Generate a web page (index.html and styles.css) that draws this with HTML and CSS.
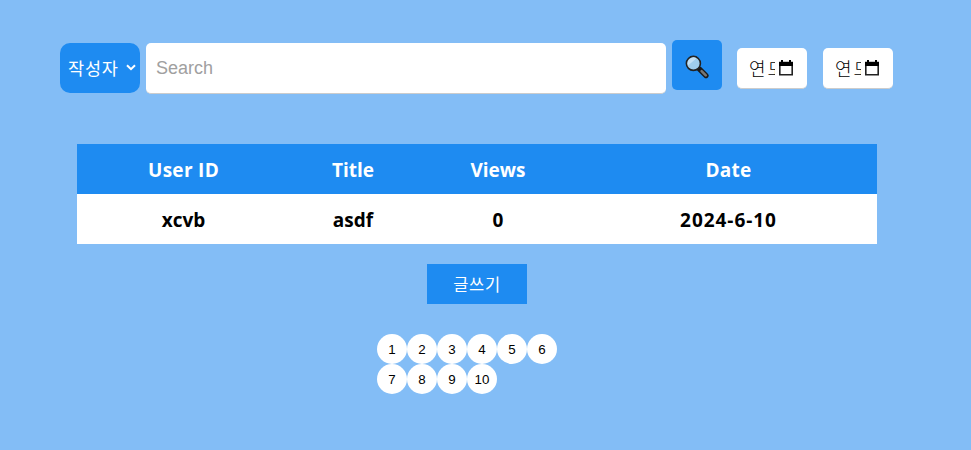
FILE: index.html
```html
<!DOCTYPE html>
<html lang="ko">
<head>
    <meta charset="UTF-8">
    <meta name="viewport" content="width=device-width, initial-scale=1.0">
    <title>Board</title>
    <link rel="stylesheet" href="styles.css">
</head>
<body>
    <form class="search">
        <div class="search-type">
            <span>작성자</span>
            <svg width="10" height="7" viewBox="0 0 10 7"><path d="M1 1.2L5 5.2L9 1.2" fill="none" stroke="#fff" stroke-width="2"/></svg>
        </div>
        <input class="search-text" type="text" placeholder="Search">
        <button class="search-btn" type="button">
            <svg width="24" height="24" viewBox="0 0 24 24">
                <path d="M14.5 14.2L21 20.6" stroke="#1a1a1a" stroke-width="5.2" stroke-linecap="round"/>
                <path d="M16.6 16.2L20.8 20.4" stroke="#777" stroke-width="2.6" stroke-linecap="round"/>
                <circle cx="8.4" cy="8.4" r="7" fill="#9fcdec" stroke="#222" stroke-width="1.6"/>
                <path d="M3 10.5L11.5 3.2A6 6 0 0 0 3 10.5z" fill="#c4e1f5"/>
            </svg>
        </button>
        <div class="date">
            <span class="date-text">연도</span>
            <svg width="16" height="16" viewBox="0 0 16 16"><path d="M1.8 2.5h12.4v12.2H1.8z" fill="none" stroke="#222" stroke-width="1.6"/><path d="M1 2h14v4H1zM3 0h2v3H3zM11 0h2v3h-2z" fill="#000"/></svg>
        </div>
        <div class="date">
            <span class="date-text">연도</span>
            <svg width="16" height="16" viewBox="0 0 16 16"><path d="M1.8 2.5h12.4v12.2H1.8z" fill="none" stroke="#222" stroke-width="1.6"/><path d="M1 2h14v4H1zM3 0h2v3H3zM11 0h2v3h-2z" fill="#000"/></svg>
        </div>
    </form>
    <main class="board">
        <table class="list">
            <colgroup>
                <col class="col-user">
                <col class="col-title">
                <col class="col-views">
                <col class="col-date">
            </colgroup>
            <thead>
                <tr><th class="user">User ID</th><th>Title</th><th>Views</th><th class="user">Date</th></tr>
            </thead>
            <tbody>
                <tr><td>xcvb</td><td>asdf</td><td>0</td><td class="day">2024-6-10</td></tr>
            </tbody>
        </table>
        <button class="write" type="button">글쓰기</button>
        <div class="pages">
            <button>1</button>
            <button>2</button>
            <button>3</button>
            <button>4</button>
            <button>5</button>
            <button>6</button>
            <button>7</button>
            <button>8</button>
            <button>9</button>
            <button>10</button>
        </div>
    </main>
</body>
</html>
```
FILE: styles.css
```css
* {
    box-sizing: border-box;
}
body {
    margin: 0;
    background: #83bdf6;
    font-family: "Open Sans", "Noto Sans CJK KR", sans-serif;
}
button {
    border: none;
    padding: 0;
}
.search {
    display: flex;
    align-items: flex-start;
    padding: 40px 0 0 60px;
    height: 144px;
}
.search-type {
    display: flex;
    align-items: center;
    justify-content: space-between;
    width: 80px;
    height: 50px;
    margin-top: 3px;
    padding: 0 4px 1px 8px;
    border-radius: 10px;
    background: #1e8bf1;
    color: #fff;
    font: 17.5px "Noto Sans CJK KR", sans-serif;
    letter-spacing: 0.8px;
    white-space: nowrap;
}
.search-text {
    width: 520px;
    height: 51px;
    margin: 3px 6px 0;
    padding: 0 10px;
    border: none;
    border-bottom: 1px solid #ccc;
    border-radius: 5px;
    font: 18px "Liberation Sans", Arial, sans-serif;
}
.search-text::placeholder {
    color: #a0a0a0;
}
.search-btn {
    display: flex;
    align-items: center;
    justify-content: center;
    width: 50px;
    height: 50px;
    padding: 4px 1px 0 0;
    border-radius: 5px;
    background: #1e8bf1;
}
.date {
    display: flex;
    align-items: center;
    width: 70px;
    height: 41px;
    margin: 8px 1px 0 15px;
    padding: 0 12px 1px;
    border-bottom: 1px solid #ccc;
    border-radius: 5px;
    background: #fff;
}
.date-text {
    width: 26px;
    overflow: hidden;
    font: 300 18px "Noto Sans CJK KR", sans-serif;
    letter-spacing: 2px;
    white-space: nowrap;
}
.date svg {
    flex: none;
    margin-left: 3px;
}
.board {
    display: flex;
    flex-direction: column;
    align-items: center;
    width: 800px;
    margin-left: 77px;
}
.list {
    width: 800px;
    table-layout: fixed;
    border-collapse: collapse;
    background: #fff;
    font-size: 19px;
    font-weight: bold;
    text-align: center;
}
.list th,
.list td {
    height: 50px;
    padding: 2px 0 0;
}
.list thead {
    background: #1e8bf1;
    color: #fff;
}
.list .user {
    letter-spacing: 0.3px;
}
.list .day {
    letter-spacing: 0.95px;
}
.col-user {
    width: 213px;
}
.col-title {
    width: 126px;
}
.col-views {
    width: 164px;
}
.col-date {
    width: 297px;
}
.write {
    width: 100px;
    height: 40px;
    margin: 20px 0 30px;
    padding-bottom: 1px;
    background: #1e8bf1;
    color: #fff;
    font: 16.5px "Noto Sans CJK KR", sans-serif;
    letter-spacing: 0.6px;
}
.pages {
    display: flex;
    flex-wrap: wrap;
    width: 200px;
}
.pages button {
    width: 30px;
    height: 30px;
    border-radius: 50%;
    background: #fff;
    color: #000;
    font: 13.333px "Liberation Sans", Arial, sans-serif;
}
```
